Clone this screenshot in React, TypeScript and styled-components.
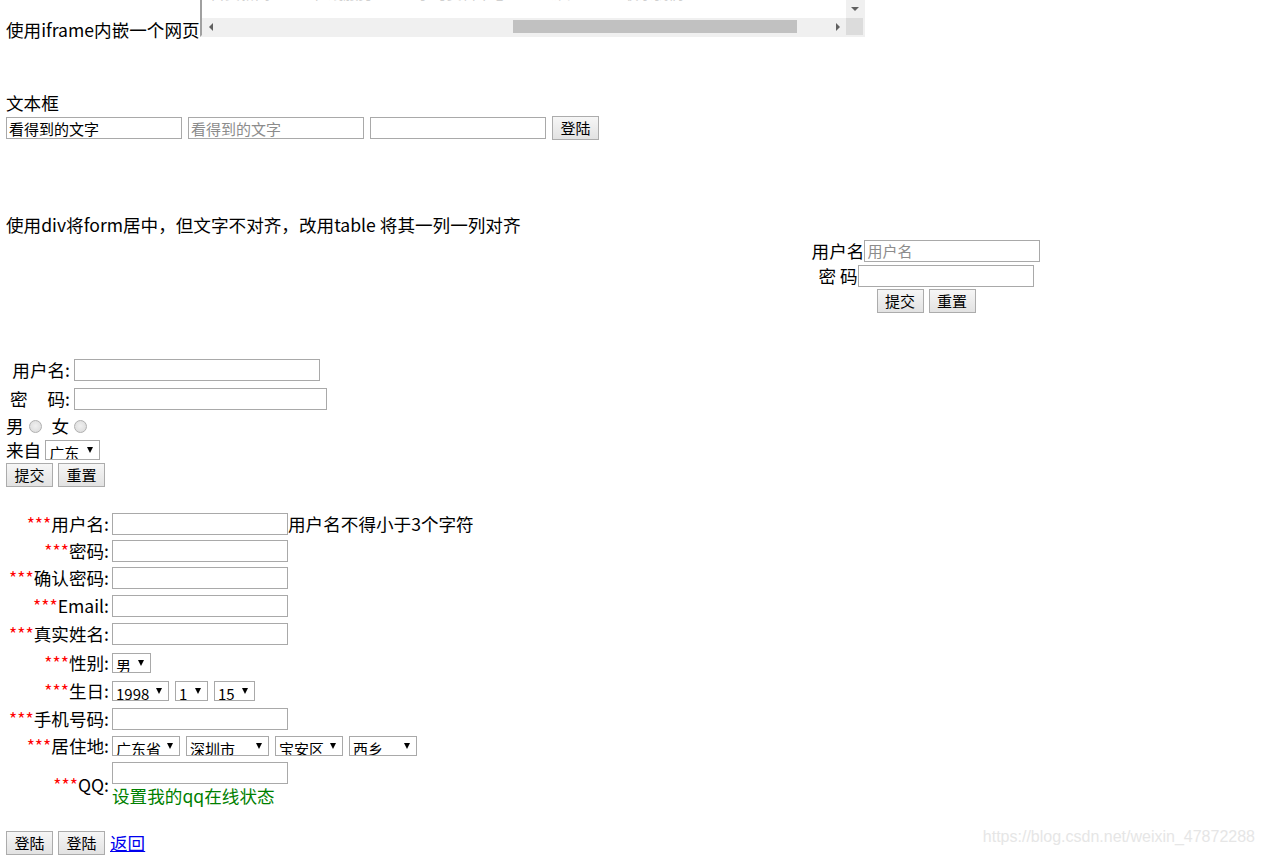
import React from "react";
import styled, { createGlobalStyle } from "styled-components";

const CJK = `"Noto Sans CJK SC", "Microsoft YaHei", sans-serif`;

const GlobalStyle = createGlobalStyle`
  html, body { margin: 0; padding: 0; background: #fff; }
  body {
    font-family: ${CJK};
    font-size: 17.6px;
    line-height: 20px;
    color: #000;
    overflow: hidden;
  }
  #root { position: relative; width: 1264px; height: 856px; overflow: hidden; }
`;

const Page = styled.div`
  padding-left: 6px;
`;

/* ---------- iframe section ---------- */
const IframeLine = styled.div`
  display: flex;
  align-items: flex-start;
  height: 41px;
`;

const Caption = styled.span`
  width: 194px;
  margin-top: 20px;
  white-space: nowrap;
`;

const FrameBox = styled.div`
  box-sizing: border-box;
  width: 665px;
  height: 37px;
  border-left: 2px solid #a0a0a0;
  border-right: 2px solid #f0f0f0;
  border-bottom: 2px solid #f0f0f0;
  display: grid;
  grid-template-columns: 1fr 17px;
  grid-template-rows: 18px 17px;
`;

const FrameContent = styled.div`
  overflow: hidden;
  background: #fff;
`;

const FaintText = styled.div`
  margin-top: -16px;
  padding-left: 8px;
  font-size: 15px;
  line-height: 18px;
  color: #d0d0d0;
  white-space: nowrap;
  word-spacing: 40px;
`;

const VScroll = styled.div`
  background: #f0f0f0;
  display: flex;
  justify-content: center;
  padding-top: 7px;
  box-sizing: border-box;
`;

const HScroll = styled.div`
  display: flex;
  align-items: center;
  background: #f0f0f0;
`;

const ArrowCell = styled.div`
  width: 17px;
  height: 17px;
  display: flex;
  align-items: center;
  justify-content: center;
  flex: none;
`;

const Tri = styled.span<{ $dir: "left" | "right" | "down" }>`
  width: 0;
  height: 0;
  ${(p) =>
    p.$dir === "left"
      ? `border-top: 4px solid transparent; border-bottom: 4px solid transparent; border-right: 4px solid #606060;`
      : p.$dir === "right"
      ? `border-top: 4px solid transparent; border-bottom: 4px solid transparent; border-left: 4px solid #606060;`
      : `border-left: 4px solid transparent; border-right: 4px solid transparent; border-top: 4px solid #606060;`}
`;

const Track = styled.div`
  flex: 1;
  height: 17px;
  display: flex;
  align-items: center;
`;

const Thumb = styled.div`
  margin-left: 294px;
  width: 284px;
  height: 13px;
  background: #c1c1c1;
`;

const Corner = styled.div`
  background: #dcdcdc;
`;

/* ---------- generic ---------- */
const TextLine = styled.div<{ $mt: number }>`
  margin-top: ${(p) => p.$mt}px;
  height: 20px;
  white-space: nowrap;
`;

const Row = styled.div<{ $h: number; $mt?: number; $gap?: number; $center?: boolean }>`
  display: flex;
  align-items: center;
  justify-content: ${(p) => (p.$center ? "center" : "flex-start")};
  height: ${(p) => p.$h}px;
  margin-top: ${(p) => p.$mt ?? 0}px;
  gap: ${(p) => p.$gap ?? 0}px;
  white-space: nowrap;
`;

const Input = styled.input<{ $w?: number }>`
  box-sizing: border-box;
  width: ${(p) => p.$w ?? 176}px;
  height: 22px;
  margin: 0;
  padding: 0 2px;
  border: 1px solid #a9a9a9;
  border-radius: 0;
  font: 15px ${CJK};
  color: #000;
  background: #fff;
  outline: none;
  &::placeholder {
    color: #8c8c8c;
  }
`;

const Btn = styled.button`
  box-sizing: border-box;
  height: 24px;
  width: 47px;
  margin: 0;
  padding: 0;
  border: 1px solid #acacac;
  border-radius: 0;
  background: linear-gradient(#f6f6f6, #e2e2e2);
  font: 15px ${CJK};
  line-height: 20px;
  color: #000;
  flex: none;
`;

const SelectWrap = styled.span<{ $w: number }>`
  position: relative;
  display: inline-block;
  flex: none;
  width: ${(p) => p.$w}px;
  height: 20px;
  &::after {
    content: "";
    position: absolute;
    right: 7px;
    top: 7px;
    border-left: 3.5px solid transparent;
    border-right: 3.5px solid transparent;
    border-top: 6px solid #000;
    pointer-events: none;
  }
`;

const Select = styled.select`
  appearance: none;
  -webkit-appearance: none;
  box-sizing: border-box;
  width: 100%;
  height: 100%;
  margin: 0;
  padding: 1px 0 0 3px;
  border: 1px solid #a9a9a9;
  border-radius: 0;
  background: #fff;
  font: 15px ${CJK};
  color: #000;
  outline: none;
`;

const Radio = styled.input`
  appearance: none;
  -webkit-appearance: none;
  box-sizing: border-box;
  width: 13px;
  height: 13px;
  margin: 0;
  border-radius: 50%;
  border: 1px solid #b0b0b0;
  background: radial-gradient(circle at 50% 45%, #f0f0f0, #d8d8d8);
  flex: none;
`;

/* ---------- centered form ---------- */
const CenterForm = styled.div`
  margin-top: 3px;
  margin-left: 600px;
  width: 640px;
`;

/* ---------- form 2 ---------- */
const Form2 = styled.div`
  margin-top: 43px;
`;

const Label2 = styled.span`
  width: 64px;
  margin-right: 4px;
  text-align: right;
  flex: none;
`;

const SplitLabel = styled.span`
  width: 60px;
  padding-left: 4px;
  margin-right: 4px;
  display: flex;
  justify-content: space-between;
  flex: none;
`;

/* ---------- big table ---------- */
const Table = styled.div`
  margin-top: 20px;
`;

const TRow = styled.div<{ $h: number }>`
  display: flex;
  align-items: center;
  height: ${(p) => p.$h}px;
  white-space: nowrap;
`;

const LabelCell = styled.div`
  width: 103px;
  padding-right: 1px;
  text-align: right;
  flex: none;
`;

const Star = styled.span`
  color: #ff0000;
`;

const FieldCell = styled.div<{ $gap?: number }>`
  margin-left: 2px;
  display: flex;
  align-items: center;
  gap: ${(p) => p.$gap ?? 0}px;
`;

const StackCell = styled.div`
  margin-left: 2px;
  display: flex;
  flex-direction: column;
  align-self: flex-start;
  padding-top: 2px;
`;

const GreenText = styled.span`
  color: #008000;
  line-height: 21px;
  margin-top: 1px;
`;

const BackLink = styled.a`
  color: #0000ee;
  text-decoration: underline;
  cursor: pointer;
`;

const Watermark = styled.div`
  position: absolute;
  right: 9px;
  top: 828px;
  font-family: "Liberation Sans", Arial, sans-serif;
  font-size: 16px;
  line-height: 18px;
  color: #e6e6e6;
  white-space: nowrap;
`;

const Field = ({ label, children, h, gap }: { label: string; children: React.ReactNode; h: number; gap?: number }) => (
  <TRow $h={h}>
    <LabelCell>
      <Star>***</Star>
      {label}
    </LabelCell>
    <FieldCell $gap={gap}>{children}</FieldCell>
  </TRow>
);

const Sel = ({ w, value, options }: { w: number; value: string; options: string[] }) => (
  <SelectWrap $w={w}>
    <Select defaultValue={value}>
      {options.map((o) => (
        <option key={o}>{o}</option>
      ))}
    </Select>
  </SelectWrap>
);

export default function App() {
  return (
    <>
      <GlobalStyle />
      <Page>
        <IframeLine>
          <Caption>使用iframe内嵌一个网页</Caption>
          <FrameBox>
            <FrameContent>
              <FaintText>首页新闻 在线服务 学习资料中心 课程 联系我们</FaintText>
            </FrameContent>
            <VScroll>
              <Tri $dir="down" />
            </VScroll>
            <HScroll>
              <ArrowCell>
                <Tri $dir="left" />
              </ArrowCell>
              <Track>
                <Thumb />
              </Track>
              <ArrowCell>
                <Tri $dir="right" />
              </ArrowCell>
            </HScroll>
            <Corner />
          </FrameBox>
        </IframeLine>

        <TextLine $mt={52}>文本框</TextLine>
        <Row $h={24} $mt={3} $gap={6}>
          <Input defaultValue="看得到的文字" />
          <Input placeholder="看得到的文字" />
          <Input type="password" />
          <Btn>登陆</Btn>
        </Row>

        <TextLine $mt={75}>使用div将form居中，但文字不对齐，改用table 将其一列一列对齐</TextLine>
        <CenterForm>
          <Row $h={25} $center>
            用户名
            <Input placeholder="用户名" />
          </Row>
          <Row $h={25} $center>
            密 码
            <Input type="password" />
          </Row>
          <Row $h={25} $center $gap={5}>
            <Btn>提交</Btn>
            <Btn>重置</Btn>
          </Row>
        </CenterForm>

        <Form2>
          <Row $h={28}>
            <Label2>{"\u00a0用户名:"}</Label2>
            <Input $w={246} />
          </Row>
          <Row $h={29}>
            <SplitLabel>
              <span>密</span>
              <span>码:</span>
            </SplitLabel>
            <Input $w={253} type="password" />
          </Row>
          <Row $h={26}>
            男
            <Radio type="radio" name="sex" style={{ marginLeft: 5 }} />
            <span style={{ marginLeft: 10 }}>女</span>
            <Radio type="radio" name="sex" style={{ marginLeft: 5 }} />
          </Row>
          <Row $h={21} $gap={4}>
            来自
            <Sel w={55} value="广东" options={["广东", "广西", "湖南"]} />
          </Row>
          <Row $h={30} $gap={5}>
            <Btn>提交</Btn>
            <Btn>重置</Btn>
          </Row>
        </Form2>

        <Table>
          <Field label="用户名:" h={27}>
            <Input />
            用户名不得小于3个字符
          </Field>
          <Field label="密码:" h={27}>
            <Input type="password" />
          </Field>
          <Field label="确认密码:" h={28}>
            <Input type="password" />
          </Field>
          <Field label="Email:" h={28}>
            <Input />
          </Field>
          <Field label="真实姓名:" h={28}>
            <Input />
          </Field>
          <Field label="性别:" h={29}>
            <Sel w={39} value="男" options={["男", "女"]} />
          </Field>
          <Field label="生日:" h={28} gap={6}>
            <Sel w={57} value="1998" options={["1997", "1998", "1999"]} />
            <Sel w={33} value="1" options={["1", "2", "3"]} />
            <Sel w={41} value="15" options={["14", "15", "16"]} />
          </Field>
          <Field label="手机号码:" h={27}>
            <Input />
          </Field>
          <Field label="居住地:" h={28} gap={6}>
            <Sel w={68} value="广东省" options={["广东省", "湖南省"]} />
            <Sel w={83} value="深圳市" options={["深圳市", "广州市"]} />
            <Sel w={68} value="宝安区" options={["宝安区", "南山区"]} />
            <Sel w={68} value="西乡" options={["西乡", "新安"]} />
          </Field>
          <TRow $h={50}>
            <LabelCell>
              <Star>***</Star>QQ:
            </LabelCell>
            <StackCell>
              <Input />
              <GreenText>设置我的qq在线状态</GreenText>
            </StackCell>
          </TRow>
        </Table>

        <Row $h={24} $mt={21} $gap={5}>
          <Btn>登陆</Btn>
          <Btn>登陆</Btn>
          <BackLink href="#">返回</BackLink>
        </Row>
      </Page>
      <Watermark>https://blog.csdn.net/weixin_47872288</Watermark>
    </>
  );
}
